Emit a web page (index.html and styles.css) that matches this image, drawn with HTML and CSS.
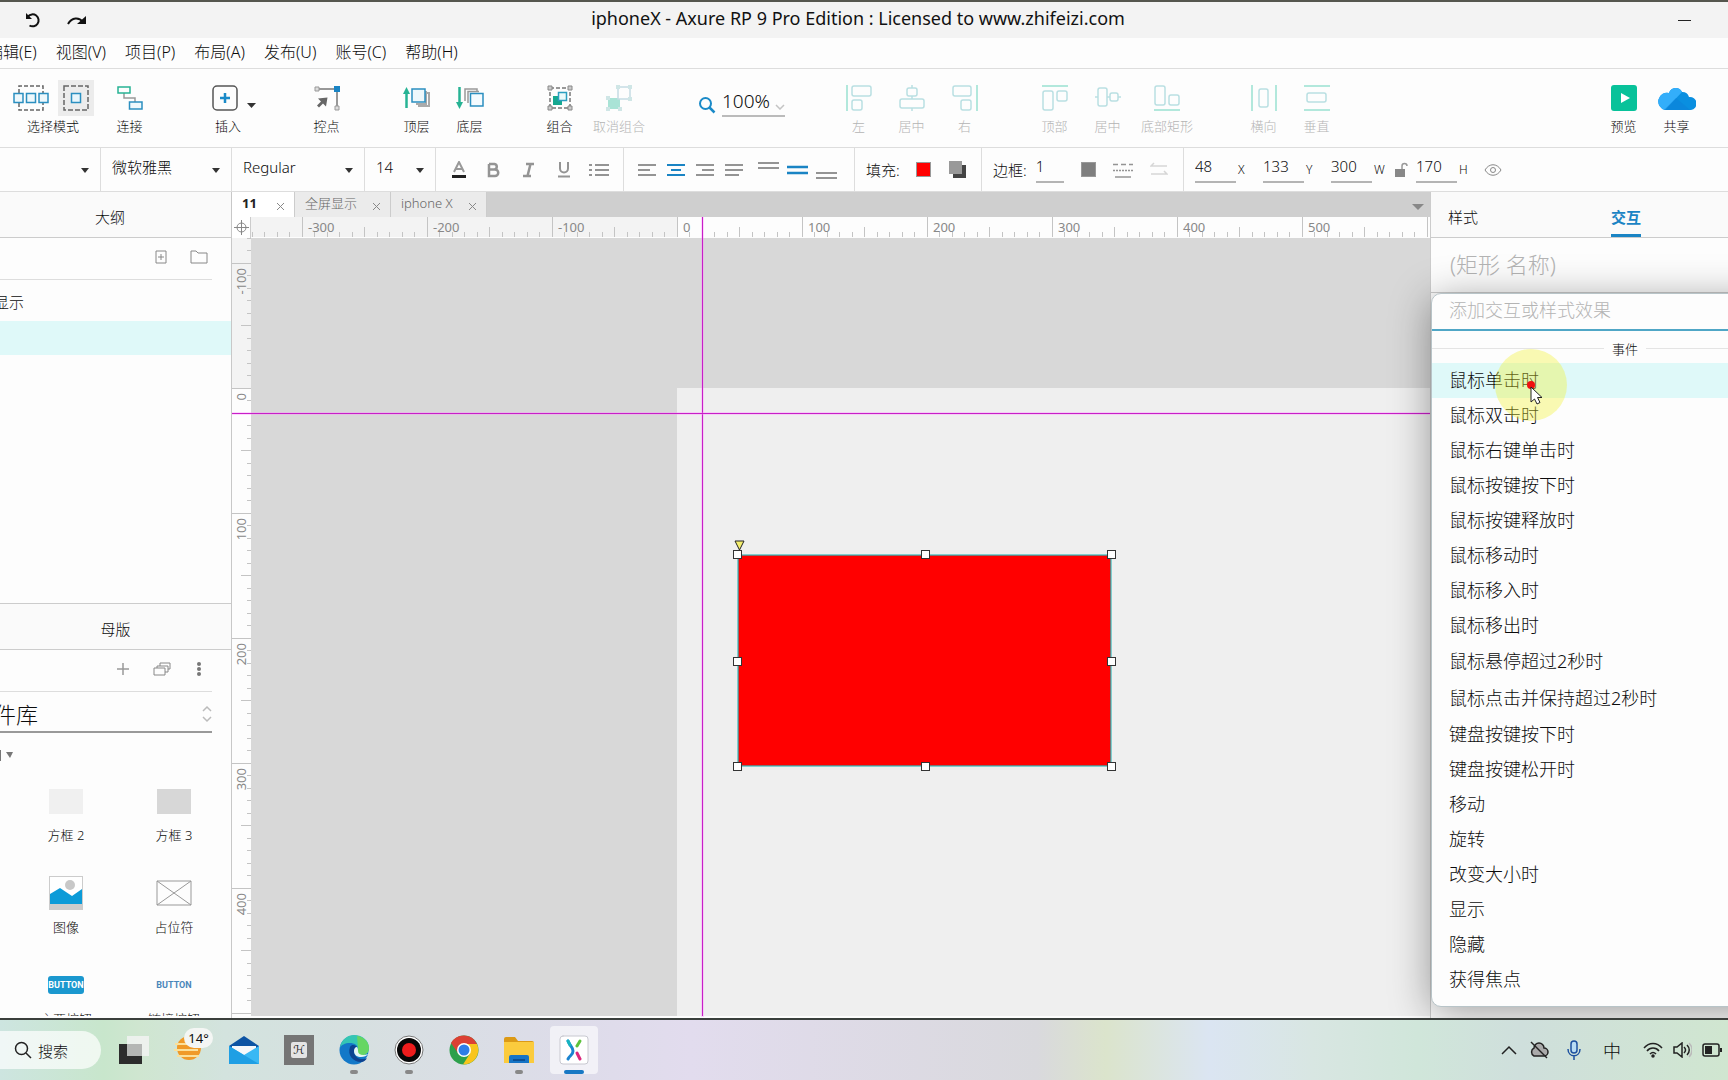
FILE: index.html
```html
<!DOCTYPE html>
<html lang="zh-CN">
<head>
<meta charset="utf-8">
<title>iphoneX - Axure RP 9</title>
<link rel="stylesheet" href="styles.css">
</head>
<body>
<header class="titlebar">
  <div class="title-actions">
    <button class="bare" aria-label="撤销"><svg width="18" height="18" viewBox="0 0 18 18" fill="none" stroke="#111" stroke-width="2"><path d="M4 5.500A6 6 0 1 1 5.500 14.500"/><path d="M2 2v6h6z" fill="#111" stroke="none"/></svg></button>
    <button class="bare" aria-label="重做"><svg width="20" height="18" viewBox="0 0 20 18" fill="none" stroke="#111" stroke-width="2"><path d="M1 13C5 6 12 6 16 11"/><path d="M19 5v8h-9z" fill="#111" stroke="none"/></svg></button>
  </div>
  <h1 class="title">iphoneX - Axure RP 9 Pro Edition : Licensed to www.zhifeizi.com</h1>
  <button class="bare minimize" aria-label="最小化"><svg width="14" height="14" viewBox="0 0 14 14" stroke="#222"><path d="M0 7.500h13"/></svg></button>
</header>

<nav class="menubar">
  <button class="bare">编辑(E)</button>
  <button class="bare">视图(V)</button>
  <button class="bare">项目(P)</button>
  <button class="bare">布局(A)</button>
  <button class="bare">发布(U)</button>
  <button class="bare">账号(C)</button>
  <button class="bare">帮助(H)</button>
</nav>

<div class="toolbar">
  <div class="group">
    <div class="mode" role="group" aria-labelledby="mode-label">
      <div class="mode-buttons">
        <button class="bare mode-button" aria-label="相交选中"><svg width="36" height="26" viewBox="0 0 36 26" fill="none"><path d="M6 8V1h24v7M6 18v7h24v-7" stroke="#666" stroke-width="1.500" stroke-dasharray="4 2"/><g stroke="#2b8fc0" stroke-width="1.500" fill="#eef8fc"><path d="M1 8.500h9v9H1zM13.500 8.500h9v9h-9zM26 8.500h9v9h-9z"/></g></svg></button>
        <button class="bare mode-button active" aria-label="包含选中"><svg width="26" height="26" viewBox="0 0 26 26" fill="none"><path d="M1 1h24v24H1z" stroke="#666" stroke-width="1.500" stroke-dasharray="5 2"/><path d="M8.500 8.500h9v9h-9z" stroke="#2b8fc0" stroke-width="1.500" fill="#e8f6fc"/></svg></button>
      </div>
      <span class="tool-label" id="mode-label">选择模式</span>
    </div>
    <button class="tool"><span class="tool-icon"><svg width="26" height="26" viewBox="0 0 26 26" fill="none" stroke-width="1.500"><path d="M7 8v5h11v4" stroke="#999"/><path d="M1 2h12v6H1z" stroke="#27b394"/><path d="M12.500 17H25v7H12.500z" stroke="#2b8fc0" fill="#eef8fc"/></svg></span><span class="tool-label">连接</span></button>
  </div>

  <button class="tool insert"><span class="tool-icon"><svg width="46" height="26" viewBox="0 0 46 26" fill="none"><rect x="1" y="1" width="24" height="24" rx="4" stroke="#555" stroke-width="1.500"/><path d="M13 8v10M8 13h10" stroke="#1a8ac8" stroke-width="2.500"/><path d="M35 18h9l-4.500 5z" fill="#333"/></svg></span><span class="tool-label">插入</span></button>

  <button class="tool"><span class="tool-icon"><svg width="26" height="26" viewBox="0 0 26 26" fill="none"><path d="M3 4h20v20" stroke="#777" stroke-width="1.500"/><path d="M1 2h4v4H1zM21 21h4v4h-4z" fill="#ddd" stroke="#999"/><path d="M20 1h6v6h-6z" fill="#1a84c4"/><path d="M13.500 12.500l-1.500 9-3-3-4 4-2-2 4-4-3-3z" fill="#666"/></svg></span><span class="tool-label">控点</span></button>

  <div class="group">
    <button class="tool"><span class="tool-icon"><svg width="28" height="26" viewBox="0 0 28 26" fill="none"><path d="M3.500 6v17" stroke="#27b394" stroke-width="2.500"/><path d="M0 9l3.500-7L7 9z" fill="#27b394"/><path d="M15 21h11V8h-4M13 19h10V6" stroke="#aaa" stroke-width="2"/><path d="M9 4h13v13H9z" fill="#eef8fc" stroke="#2b8fc0" stroke-width="1.500"/></svg></span><span class="tool-label">顶层</span></button>
    <button class="tool"><span class="tool-icon"><svg width="28" height="26" viewBox="0 0 28 26" fill="none"><path d="M3.500 2v18" stroke="#27b394" stroke-width="2.500"/><path d="M0 17l3.500 7L7 17z" fill="#27b394"/><path d="M9 16V4h12v3M12 18V6.500h11" stroke="#999" stroke-width="1.500"/><path d="M14.500 8.500H27V21H14.500z" fill="#f4fbff" stroke="#2b8fc0" stroke-width="1.500"/></svg></span><span class="tool-label">底层</span></button>
  </div>

  <div class="group">
    <button class="tool"><span class="tool-icon"><svg width="26" height="26" viewBox="0 0 26 26" fill="none"><path d="M3 3h20v20H3z" stroke="#777" stroke-width="1.500" stroke-dasharray="4 2"/><g fill="#ccc" stroke="#888"><path d="M1 1h4v4H1zM21 1h4v4h-4zM1 21h4v4H1zM21 21h4v4h-4z"/></g><path d="M6 11h9v9H6z" fill="#16a890"/><path d="M11.500 7.500h8v8h-8z" fill="#eafafa" stroke="#2b9fc0" stroke-width="1.500"/></svg></span><span class="tool-label">组合</span></button>
    <button class="tool wide" disabled><span class="tool-icon"><svg width="26" height="26" viewBox="0 0 26 26" fill="none"><path d="M2 13h12v11H2z" fill="#a9e3d6"/><path d="M12 2h12v12H12z" fill="#fdfdfd" stroke="#c5dce4" stroke-width="1.500"/><g fill="#cfe6e6"><path d="M10 0h4v4h-4zM22 0h4v4h-4zM22 12h4v4h-4zM0 11h4v4H0zM0 22h4v4H0zM12 22h4v4h-4z"/></g></svg></span><span class="tool-label">取消组合</span></button>
  </div>

  <div class="zoom">
    <svg width="18" height="18" viewBox="0 0 18 18" fill="none" stroke="#1a8ac8"><circle cx="7.500" cy="7.500" r="5.500" stroke-width="2"/><path d="M11.500 11.500l5 5" stroke-width="2.500"/></svg>
    <span class="zoom-field"><select aria-label="缩放"><option>100%</option></select><svg width="10" height="6" viewBox="0 0 10 6" fill="none" stroke="#c4c4c4" stroke-width="1.500"><path d="M1 1l4 4 4-4"/></svg></span>
  </div>

  <div class="group">
    <button class="tool" disabled><span class="tool-icon"><svg class="align" width="26" height="26" viewBox="0 0 26 26"><path class="guide" d="M1 0v26"/><rect x="6" y="1" width="19" height="10" rx="2"/><rect x="6" y="15" width="10" height="10" rx="2"/></svg></span><span class="tool-label">左</span></button>
    <button class="tool" disabled><span class="tool-icon"><svg class="align" width="26" height="26" viewBox="0 0 26 26"><path d="M13 0v3M13 11v3M13 23v3"/><rect x="8" y="3" width="10" height="8" rx="2"/><rect x="1" y="14" width="24" height="9" rx="2"/></svg></span><span class="tool-label">居中</span></button>
    <button class="tool" disabled><span class="tool-icon"><svg class="align" width="26" height="26" viewBox="0 0 26 26"><path class="guide" d="M25 0v26"/><rect x="1" y="1" width="18" height="10" rx="2"/><rect x="9" y="15" width="10" height="10" rx="2"/></svg></span><span class="tool-label">右</span></button>
  </div>

  <div class="group">
    <button class="tool" disabled><span class="tool-icon"><svg class="align" width="26" height="26" viewBox="0 0 26 26"><path class="guide" d="M0 1h26"/><rect x="1" y="6" width="10" height="19" rx="2"/><rect x="15" y="6" width="10" height="10" rx="2"/></svg></span><span class="tool-label">顶部</span></button>
    <button class="tool" disabled><span class="tool-icon"><svg class="align" width="26" height="26" viewBox="0 0 26 26"><path d="M0 12h3M12 12h3M23 12h3"/><rect x="3" y="3" width="9" height="18" rx="2"/><rect x="15" y="8" width="8" height="8" rx="2"/></svg></span><span class="tool-label">居中</span></button>
    <button class="tool wide" disabled><span class="tool-icon"><svg class="align" width="26" height="26" viewBox="0 0 26 26"><path class="guide" d="M0 25h26"/><rect x="1" y="1" width="10" height="19" rx="2"/><rect x="15" y="10" width="10" height="10" rx="2"/></svg></span><span class="tool-label">底部矩形</span></button>
  </div>

  <div class="group">
    <button class="tool" disabled><span class="tool-icon"><svg class="align" width="26" height="26" viewBox="0 0 26 26"><path class="guide" d="M1 0v26M25 0v26"/><rect x="8" y="4" width="9" height="18" rx="2"/></svg></span><span class="tool-label">横向</span></button>
    <button class="tool" disabled><span class="tool-icon"><svg class="align" width="26" height="26" viewBox="0 0 26 26"><path class="guide" d="M0 1h26M0 25h26"/><rect x="3" y="8" width="19" height="9" rx="2"/></svg></span><span class="tool-label">垂直</span></button>
  </div>

  <div class="group share">
    <button class="tool"><span class="tool-icon"><svg width="26" height="26" viewBox="0 0 26 26"><rect width="26" height="26" rx="3" fill="#08c29a"/><path d="M10 8l9 5-9 5z" fill="#fff"/></svg></span><span class="tool-label">预览</span></button>
    <button class="tool"><span class="tool-icon"><svg width="38" height="26" viewBox="0 0 38 26"><path d="M7 25a7.500 7.500 0 0 1 4-17 7 7 0 0 1 13-1 7 7 0 0 1 7 5 6.500 6.500 0 0 1 2 13z" fill="#0a8fe0"/><path d="M7 25a7.500 7.500 0 0 1 4-17 7 7 0 0 1 13-1L7 25z" fill="#33aefa"/><path d="M18 13l14 12h-26z" fill="#0b80d8" opacity=".5"/></svg></span><span class="tool-label">共享</span></button>
  </div>
</div>

<div class="formatbar">
  <span class="pick pick-style"><select aria-label="样式"><option></option></select></span>
  <span class="pick pick-font"><select aria-label="字体"><option>微软雅黑</option></select></span>
  <span class="pick pick-weight"><select aria-label="字重"><option>Regular</option></select></span>
  <span class="pick pick-size"><select aria-label="字号"><option>14</option></select></span>

  <div class="cell text-tools">
    <button class="bare" aria-label="文字颜色"><svg width="16" height="18" viewBox="0 0 16 18" fill="none"><path d="M3 11L8 1l5 10M5 8h6" stroke="#999" stroke-width="2"/><path d="M1 14h14v3H1z" fill="#222"/></svg></button>
    <button class="bare" aria-label="粗体"><svg width="16" height="18" viewBox="0 0 16 18" fill="none" stroke="#949494" stroke-width="2.500"><path d="M3 3v12h6a3 3 0 0 0 0-6.500H3M3 3h5.500a2.800 2.800 0 0 1 0 5.500"/></svg></button>
    <button class="bare" aria-label="斜体"><svg width="16" height="18" viewBox="0 0 16 18" fill="none" stroke="#949494" stroke-width="2.500"><path d="M5 3h8M2 15h8M9.500 3l-3 12" /></svg></button>
    <button class="bare" aria-label="下划线"><svg width="16" height="18" viewBox="0 0 16 18" fill="none" stroke="#949494" stroke-width="2"><path d="M4 1v6.500a4 4 0 0 0 8 0V1M2 15.500h12"/></svg></button>
    <button class="bare" aria-label="项目符号"><svg width="20" height="18" viewBox="0 0 20 18" fill="none" stroke="#949494" stroke-width="2"><path d="M0 4h3M0 9h3M0 14h3M6 4h14M6 9h14M6 14h14"/></svg></button>
  </div>

  <div class="cell align-tools">
    <div class="group">
      <button class="bare" aria-label="左对齐"><svg width="18" height="18" viewBox="0 0 18 18" stroke="#949494" stroke-width="2"><path d="M0 4h18M0 9h12M0 14h18"/></svg></button>
      <button class="bare" aria-label="居中对齐"><svg width="18" height="18" viewBox="0 0 18 18" stroke="#1a84c4" stroke-width="2"><path d="M0 4h18M4 9h10M0 14h18"/></svg></button>
      <button class="bare" aria-label="右对齐"><svg width="18" height="18" viewBox="0 0 18 18" stroke="#949494" stroke-width="2"><path d="M0 4h18M6 9h12M0 14h18"/></svg></button>
      <button class="bare" aria-label="两端对齐"><svg width="18" height="18" viewBox="0 0 18 18" stroke="#949494" stroke-width="2"><path d="M0 4h18M0 9h18M0 14h14"/></svg></button>
    </div>
    <div class="group">
      <button class="bare" aria-label="顶部对齐"><svg width="21" height="18" viewBox="0 0 21 18" stroke="#949494" stroke-width="2"><path d="M0 2h21M0 7h21"/></svg></button>
      <button class="bare" aria-label="垂直居中"><svg width="21" height="18" viewBox="0 0 21 18" stroke="#1a84c4" stroke-width="2.500"><path d="M0 6h21M0 12h21"/></svg></button>
      <button class="bare" aria-label="底部对齐"><svg width="21" height="18" viewBox="0 0 21 18" stroke="#949494" stroke-width="2"><path d="M0 12h21M0 17h21"/></svg></button>
    </div>
  </div>

  <div class="cell fill-tools">
    <span>填充:</span>
    <button class="bare swatch red" aria-label="填充颜色"></button>
    <button class="bare" aria-label="阴影"><svg width="17" height="17" viewBox="0 0 17 17"><path d="M4 4h13v13H4z" fill="#444"/><path d="M0 0h13v13H0z" fill="#999"/></svg></button>
  </div>

  <div class="cell border-tools">
    <label for="border-width">边框:</label>
    <input class="field short" id="border-width" value="1">
    <button class="bare swatch grey" aria-label="边框颜色"></button>
    <button class="bare" aria-label="线型"><svg width="20" height="18" viewBox="0 0 20 18" fill="none" stroke="#949494"><path d="M0 3.500h20" stroke-width="1.500" stroke-dasharray="5 3"/><path d="M0 9.500h20" stroke-width="1.500" stroke-dasharray="2 1"/><path d="M2 16h16" stroke-width="1.500"/></svg></button>
    <button class="bare" aria-label="箭头"><svg width="18" height="18" viewBox="0 0 18 18" fill="none" stroke="#d6d6d6" stroke-width="1.500"><path d="M17 5H1l3-3M1 13h16l-3-3"/></svg></button>
  </div>

  <div class="cell size-tools">
    <span class="dim"><input class="field" id="dim-x" value="48"><label for="dim-x">X</label></span>
    <span class="dim"><input class="field" id="dim-y" value="133"><label for="dim-y">Y</label></span>
    <span class="dim"><input class="field" id="dim-w" value="300"><label for="dim-w">W</label></span>
    <button class="bare lock" aria-label="锁定比例"><svg width="13" height="16" viewBox="0 0 13 16"><path d="M0 7h10v8H0z" fill="#888"/><path d="M7 7V4a2.500 2.500 0 0 1 5 0" fill="none" stroke="#999" stroke-width="1.500"/></svg></button>
    <span class="dim"><input class="field" id="dim-h" value="170"><label for="dim-h">H</label></span>
    <button class="bare" aria-label="可见性"><svg width="18" height="14" viewBox="0 0 18 14" fill="none" stroke="#888"><path d="M1 7c4-7 12-7 16 0-4 7-12 7-16 0z"/><circle cx="9" cy="7" r="2.500"/></svg></button>
  </div>
</div>

<main class="workspace">
  <aside class="left">
    <section class="outline">
      <h2 class="panel-head">大纲</h2>
      <div class="panel-tools">
        <button class="bare" aria-label="添加页面"><svg width="12" height="14" viewBox="0 0 12 14" fill="none" stroke="#888"><path d="M1 1h10v12H1zM6 4v6M3 7h6"/></svg></button>
        <button class="bare" aria-label="添加文件夹"><svg width="18" height="14" viewBox="0 0 18 14" fill="none" stroke="#888"><path d="M1 1h5l2 2h9v10H1z"/></svg></button>
      </div>
      <ul class="pages">
        <li><button class="bare">全屏显示</button></li>
        <li class="selected"><button class="bare" aria-label="11"></button></li>
      </ul>
    </section>
    <section class="library">
      <h2 class="panel-head">母版</h2>
      <div class="panel-tools">
        <button class="bare" aria-label="添加母版"><svg width="14" height="14" viewBox="0 0 14 14" stroke="#999" stroke-width="1.500"><path d="M7 1v12M1 7h12"/></svg></button>
        <button class="bare" aria-label="层叠"><svg width="18" height="14" viewBox="0 0 18 14" fill="none" stroke="#888"><path d="M1 6h11v7H1zM4 6V4h11v6h-3M7 4V1h10v6h-2"/></svg></button>
        <button class="bare" aria-label="更多"><svg width="10" height="14" viewBox="0 0 10 14" fill="#777"><circle cx="5" cy="2" r="2"/><circle cx="5" cy="7" r="2"/><circle cx="5" cy="12" r="2"/></svg></button>
      </div>
      <div class="library-name"><select aria-label="元件库"><option>元件库</option></select><svg width="10" height="18" viewBox="0 0 10 18" fill="none" stroke="#bbb" stroke-width="1.500"><path d="M1 6l4-4 4 4M1 12l4 4 4-4"/></svg></div>
      <button class="bare category" aria-label="分类"><svg width="14" height="12" viewBox="0 0 14 12" fill="#777"><path d="M0 1h1v11H0zM6 3h7l-3 6z"/></svg></button>
      <div class="widgets">
        <button class="widget"><span class="widget-icon"><i class="box light"></i></span>方框 2</button>
        <button class="widget"><span class="widget-icon"><i class="box dark"></i></span>方框 3</button>
        <button class="widget"><span class="widget-icon"><svg width="34" height="34" viewBox="0 0 34 34"><path d="M0 0h34v34H0z" fill="#ccc"/><path d="M1 1h32v27H1z" fill="#fff"/><circle cx="21" cy="9" r="5" fill="#c8c8c8"/><path d="M1 18l10-6 12 8 10-7v15H1z" fill="#0c9bd8"/></svg></span>图像</button>
        <button class="widget"><span class="widget-icon"><svg width="36" height="26" viewBox="0 0 36 26" fill="none" stroke="#999"><path d="M1 1h34v24H1zM1 1l34 24M35 1L1 25"/></svg></span>占位符</button>
        <button class="widget"><span class="widget-icon"><b class="mini primary">BUTTON</b></span>主要按钮</button>
        <button class="widget"><span class="widget-icon"><b class="mini link">BUTTON</b></span>链接按钮</button>
      </div>
    </section>
  </aside>

  <section class="editor">
    <div class="tabs">
      <div class="tab current"><span>11</span><button class="bare close" aria-label="关闭"><svg width="9" height="9" viewBox="0 0 9 9" stroke="#888"><path d="M1 1l7 7M8 1L1 8"/></svg></button></div>
      <div class="tab"><span>全屏显示</span><button class="bare close" aria-label="关闭"><svg width="9" height="9" viewBox="0 0 9 9" stroke="#888"><path d="M1 1l7 7M8 1L1 8"/></svg></button></div>
      <div class="tab"><span>iphone X</span><button class="bare close" aria-label="关闭"><svg width="9" height="9" viewBox="0 0 9 9" stroke="#888"><path d="M1 1l7 7M8 1L1 8"/></svg></button></div>
      <button class="bare tab-list" aria-label="所有标签"><svg width="12" height="8" viewBox="0 0 12 8"><path d="M0 1h12l-6 6z" fill="#888"/></svg></button>
    </div>
    <div class="stage">
      <div class="corner"><svg width="15" height="15" viewBox="0 0 15 15" fill="none" stroke="#888"><circle cx="7.500" cy="7.500" r="4.500"/><path d="M7.500 0v15M0 7.500h15"/></svg></div>
      <svg class="ruler ruler-x" width="100%" height="20">
        <defs><pattern id="ticks-x" x="426" y="0" width="125" height="20" patternUnits="userSpaceOnUse"><path stroke="#c4c4c4" d="M.500 0v20M12.500 15v5M25.500 15v5M37.500 15v5M50.500 15v5M62.500 10v10M75.500 15v5M87.500 15v5M100.500 15v5M112.500 15v5"/></pattern></defs>
        <rect width="426" height="20" fill="#f3f3f3"/>
        <rect width="100%" height="20" fill="url(#ticks-x)"/>
        <g><text x="57" y="15">-300</text><text x="182" y="15">-200</text><text x="307" y="15">-100</text><text x="432" y="15">0</text><text x="557" y="15">100</text><text x="682" y="15">200</text><text x="807" y="15">300</text><text x="932" y="15">400</text><text x="1057" y="15">500</text></g>
      </svg>
      <svg class="ruler ruler-y" width="20" height="100%">
        <defs><pattern id="ticks-y" x="0" y="150" width="20" height="125" patternUnits="userSpaceOnUse"><path stroke="#c4c4c4" d="M0 .500h20M15 12.500h5M15 25.500h5M15 37.500h5M15 50.500h5M9 62.500h11M15 75.500h5M15 87.500h5M15 100.500h5M15 112.500h5"/></pattern></defs>
        <rect width="20" height="150" fill="#f3f3f3"/>
        <rect width="20" height="100%" fill="url(#ticks-y)"/>
        <g text-anchor="end"><text transform="translate(14 30) rotate(-90)">-100</text><text transform="translate(14 155) rotate(-90)">0</text><text transform="translate(14 280) rotate(-90)">100</text><text transform="translate(14 405) rotate(-90)">200</text><text transform="translate(14 530) rotate(-90)">300</text><text transform="translate(14 655) rotate(-90)">400</text></g>
      </svg>
      <div class="canvas">
        <div class="page">
          <div class="shape">
            <i class="handle n w"></i><i class="handle n c"></i><i class="handle n e"></i>
            <i class="handle m w"></i><i class="handle m e"></i>
            <i class="handle s w"></i><i class="handle s c"></i><i class="handle s e"></i>
            <svg class="radius-grip" width="11" height="11" viewBox="0 0 11 11"><path d="M1 1h9l-4.500 9z" fill="#f4ee6c" stroke="#222"/></svg>
          </div>
        </div>
      </div>
      <i class="guide-v"></i>
      <i class="guide-h"></i>
    </div>
  </section>

  <aside class="right">
    <div class="inspector-tabs">
      <button class="bare">样式</button>
      <button class="bare current">交互</button>
    </div>
    <input class="shape-name" aria-label="名称" placeholder="(矩形 名称)">
    <div class="events">
      <input class="event-search" aria-label="添加交互" placeholder="添加交互或样式效果">
      <div class="event-group">事件</div>
      <button class="event hover">鼠标单击时</button>
      <button class="event">鼠标双击时</button>
      <button class="event">鼠标右键单击时</button>
      <button class="event">鼠标按键按下时</button>
      <button class="event">鼠标按键释放时</button>
      <button class="event">鼠标移动时</button>
      <button class="event">鼠标移入时</button>
      <button class="event">鼠标移出时</button>
      <button class="event tall">鼠标悬停超过2秒时</button>
      <button class="event tall">鼠标点击并保持超过2秒时</button>
      <button class="event">键盘按键按下时</button>
      <button class="event">键盘按键松开时</button>
      <button class="event">移动</button>
      <button class="event">旋转</button>
      <button class="event">改变大小时</button>
      <button class="event">显示</button>
      <button class="event">隐藏</button>
      <button class="event">获得焦点</button>
      <svg class="pointer" width="74" height="74" viewBox="0 0 74 74"><circle cx="37" cy="37" r="36" fill="#f0f02d" opacity=".36"/><circle cx="37" cy="37" r="4" fill="#f01010"/><path d="M37 39v15l3.500-3 2.500 5 3-1.500-2.500-5h4.500z" fill="#fff" stroke="#222"/></svg>
    </div>
  </aside>
</main>

<footer class="taskbar">
  <button class="search"><svg width="18" height="18" viewBox="0 0 18 18" fill="none" stroke="#222" stroke-width="1.500"><circle cx="7.500" cy="7.500" r="6"/><path d="M12 12l5 5"/></svg>搜索</button>
  <div class="apps">
    <button class="app" aria-label="任务视图"><svg width="30" height="30" viewBox="0 0 30 30"><path d="M0 9h23v20H0z" fill="#2c2c2c"/><path d="M8 1h22v20H8z" fill="#f4f4f4" opacity=".8"/><path d="M8 9h15v12H8z" fill="#b4b6b4"/></svg></button>
    <button class="app weather" aria-label="天气"><svg width="30" height="30" viewBox="0 0 30 30"><circle cx="15" cy="13" r="12" fill="#f09a28"/><path d="M1 9h16M0 15h24M3 21h22" stroke="#fbe09a" stroke-width="2"/></svg><span class="degree">14°</span></button>
    <button class="app" aria-label="邮件"><svg width="30" height="30" viewBox="0 0 30 30"><path d="M0 11L15 1l15 10v6H0z" fill="#0d54a4"/><path d="M3 11h24v9H3z" fill="#f6f8fb"/><path d="M0 11l15 9 15-9v18H0z" fill="#39b8f4"/><path d="M0 11l30 18H0z" fill="#1f9fe4"/></svg></button>
    <button class="app note" aria-label="笔记"><span class="note-tile"><span>ℋ</span></span></button>
    <button class="app running" aria-label="Edge"><svg width="30" height="30" viewBox="0 0 30 30"><circle cx="15" cy="15" r="14.500" fill="#1378c8"/><path d="M1 13C2 4 9 0 15 0c9 0 15 6 15 13 0 5-4 8-9 7-4-1-2-3-2-6 0-4-4-6-8-6-5 0-9 2-10 5z" fill="#35c6b4"/><path d="M18 1c8 1 12 7 12 12 0 5-4 8-9 7-4-1-2-3-2-6z" fill="#66d663"/><path d="M11 12c-3 8 3 15 11 15 3 0 5-2 6-4-3 2-12 2-13-6 0-3 2-4 3-5-2-2-5-3-7 0z" fill="#0d4390"/><path d="M15 16c0-2 1-4 3-4 1 1 1 3 1 4 0 4 5 5 10 3-2 4-14 5-14-3z" fill="#e5f5f4"/></svg></button>
    <button class="app running" aria-label="录屏"><svg width="30" height="30" viewBox="0 0 30 30"><circle cx="15" cy="15" r="14" fill="#fff" stroke="#777"/><circle cx="15" cy="15" r="12" fill="#080808"/><circle cx="15" cy="15" r="7" fill="#ee1c1c"/></svg></button>
    <button class="app" aria-label="Chrome"><svg width="30" height="30" viewBox="0 0 30 30"><circle cx="15" cy="15" r="14.500" fill="#2da04c"/><path d="M2 8a14.500 14.500 0 0 1 26 1H15l-6 9z" fill="#dc4034"/><path d="M28 9a14.500 14.500 0 0 1-14 20.500l7-11L15 9z" fill="#f8c51c"/><circle cx="15" cy="15" r="7" fill="#fff"/><circle cx="15" cy="15" r="5.500" fill="#2f7de8"/></svg></button>
    <button class="app running" aria-label="资源管理器"><svg width="30" height="30" viewBox="0 0 30 30"><path d="M0 4q0-2 2-2h9l3 4h14q2 0 2 2v8H0z" fill="#dc9a16"/><path d="M0 7h30v21H0z" fill="#fbcb3d"/><path d="M5 28v-6q0-2 2-2h16q2 0 2 2v6z" fill="#1674c6"/><path d="M9 24h12v2H9z" fill="#0c4f94"/></svg></button>
    <button class="app running active" aria-label="Axure"><svg width="30" height="30" viewBox="0 0 30 30" fill="none" stroke-width="3" stroke-linecap="round"><rect x="1" y="1" width="28" height="28" rx="3" fill="#fff" stroke="#c8c8d0" stroke-width="1"/><path d="M9 6c2 5 5 6 5 10s-3 4-5 8" stroke="#1b84d0"/><path d="M21 6l-3 5" stroke="#5cc23c"/><path d="M18 18l3 6" stroke="#dc287c"/><path d="M9 6l2 4" stroke="#16b4c0"/></svg></button>
  </div>
  <div class="tray">
    <div class="tray-hidden">
      <svg width="16" height="10" viewBox="0 0 16 10" fill="none" stroke="#222" stroke-width="1.500"><path d="M1 9l7-7 7 7"/></svg>
      <svg width="20" height="18" viewBox="0 0 20 18" fill="none" stroke="#222" stroke-width="1.500"><path d="M5 15a4.500 4.500 0 0 1 0-8 5 5 0 0 1 10 0 4 4 0 0 1 0 8z" fill="#aaa"/><path d="M2 1l16 16"/></svg>
    </div>
    <svg width="14" height="20" viewBox="0 0 14 20" fill="none" stroke="#1c50a0" stroke-width="1.500"><rect x="4" y="1" width="6" height="12" rx="3" fill="#b8dcf4"/><path d="M1 9c0 9 12 9 12 0M7 16v4"/></svg>
    <span class="ime">中</span>
    <div class="tray-system">
      <svg width="20" height="16" viewBox="0 0 20 16" fill="none" stroke="#222" stroke-width="1.500"><path d="M1 6c5-6 13-6 18 0M4 9c3-4 9-4 12 0M7 12c2-2 4-2 6 0"/><circle cx="10" cy="14" r="1" fill="#222"/></svg>
      <svg width="19" height="16" viewBox="0 0 19 16" fill="none" stroke="#222" stroke-width="1.500"><path d="M1 5h3l5-4v14l-5-4H1zM11 5c2 2 2 4 0 6M14 3c3 3 3 7 0 10"/><path d="M16 1c4 4 4 10 0 14" stroke="#bbb"/></svg>
      <svg width="20" height="14" viewBox="0 0 20 14"><rect x="1" y="1" width="16" height="12" rx="2" fill="none" stroke="#222" stroke-width="1.500"/><path d="M3 3h7v8H3zM18 5h2v4h-2z" fill="#222"/></svg>
    </div>
  </div>
</footer>
</body>
</html>
```
FILE: styles.css
```css
* { box-sizing: border-box; }

body {
  margin: 0;
  height: 100vh;
  display: grid;
  grid-template-rows: 38px 31px 79px 44px minmax(0, 1fr) 62px;
  grid-template-columns: minmax(0, 1fr);
  overflow: hidden;
  background: #fdfdfd;
  color: #0c0c0c;
  font-family: "Noto Sans", "Noto Sans CJK SC", sans-serif;
  font-size: 15px;
  font-weight: 300;
}

button, input, select {
  font: inherit;
  color: inherit;
  margin: 0;
  padding: 0;
  border: 0;
  border-radius: 0;
  background: none;
}
input:focus, button:focus { outline: 0; }
select { appearance: none; }
svg { display: block; flex: none; }
ul { list-style: none; margin: 0; padding: 0; }
h1, h2 { margin: 0; font-weight: inherit; }

.bare { display: flex; align-items: center; justify-content: center; white-space: nowrap; }
.group { display: flex; }

/* title bar and menu */
.titlebar {
  display: grid;
  grid-template-columns: 1fr auto 1fr;
  align-items: center;
  background: #f3f3f3;
  border-top: 2px solid #55564e;
  padding: 0 36px 0 24px;
}
.title-actions { display: flex; gap: 25px; }
.title { font-size: 18px; font-weight: 400; line-height: 30px; color: #111; padding-bottom: 4px; }
.minimize { justify-self: end; }

.menubar {
  display: flex;
  gap: 19px;
  margin-left: -13px;
  padding-bottom: 4px;
  border-bottom: 1px solid #ddd;
  font-size: 16px;
}

/* main toolbar */
.toolbar {
  display: flex;
  align-items: flex-start;
  gap: 37px;
  padding: 11px 25px 0 3px;
  border-bottom: 1px solid #ddd;
  font-size: 13px;
}
.tool { width: 53px; display: flex; flex-direction: column; align-items: center; }
.tool.wide { width: 66px; }
.insert { width: 70px; }
.insert .tool-icon { padding-left: 14px; }
.tool:disabled { color: #b4b4b4; }
.tool-icon { height: 36px; display: flex; align-items: center; }
.tool-label { line-height: 20px; white-space: nowrap; }
.mode { width: 100px; display: flex; flex-direction: column; align-items: center; }
.mode-buttons { display: flex; gap: 9px; }
.mode-button { width: 36px; height: 36px; }
.mode-button.active { background: #ececec; }
.align { fill: none; stroke: #b9dfe2; stroke-width: 1.5; }
.align .guide { stroke: #b2e8dc; stroke-width: 2; }
.zoom { width: 106px; padding: 12px 0 0 9px; display: flex; align-items: flex-start; gap: 6px; }
.zoom > svg { margin-top: 4px; }
.zoom-field { width: 63px; height: 25px; display: flex; align-items: center; border-bottom: 2px solid #bbb; }
.zoom-field svg { margin-top: 6px; }
.zoom-field select { width: 53px; font-size: 19px; line-height: 20px; margin-top: -6px; }
.share { margin-left: auto; }

/* format bar */
.formatbar { display: flex; border-bottom: 1px solid #ddd; }
.pick { display: flex; position: relative; border-right: 1px solid #ddd; }
.pick::after {
  content: "";
  position: absolute;
  right: 11px;
  top: 20px;
  border: 4px solid transparent;
  border-top: 5px solid #333;
  border-bottom: 0;
}
.pick select { width: 100%; padding: 0 24px 6px 11px; }
.pick-style { width: 101px; }
.pick-font { width: 131px; }
.pick-weight { width: 133px; }
.pick-size { width: 71px; }
.cell { display: flex; align-items: center; border-right: 1px solid #ddd; }
.text-tools { width: 188px; padding-left: 5px; }
.text-tools .bare { width: 35px; }
.align-tools { width: 231px; padding-left: 8px; gap: 6px; }
.align-tools .bare { width: 29px; }
.fill-tools { width: 127px; padding-left: 11px; gap: 16px; }
.fill-tools .swatch { margin-right: 2px; }
.border-tools { width: 202px; padding-left: 11px; gap: 17px; }
.border-tools .field { margin-left: -8px; }
.swatch { width: 15px; height: 15px; border: 1px solid #999; }
.swatch.red { background: #f00; }
.swatch.grey { background: #7f7f7f; }
.field { width: 41px; height: 26px; padding-bottom: 5px; border-bottom: 2px solid #b4b4b4; }
.field.short { width: 28px; }
.size-tools { padding-left: 11px; gap: 12px; border-right: 0; }
.dim { display: flex; align-items: center; gap: 2px; }
.dim label { width: 13px; font-size: 12px; }
.lock { margin: 0 -4px; }

/* workspace */
.workspace {
  display: grid;
  grid-template-columns: 231px minmax(0, 1fr) 297px;
  grid-template-rows: minmax(0, 1fr);
  overflow: hidden;
}
.left {
  display: grid;
  grid-template-rows: 411px minmax(0, 1fr);
  margin-bottom: 2px;
  overflow: hidden;
}
.panel-head {
  height: 46px;
  padding: 6px 11px 0 0;
  background: #fafafa;
  border-bottom: 1px solid #ccc;
  font-size: 15px;
  line-height: 38px;
  text-align: center;
}
.panel-tools {
  height: 42px;
  margin-right: 19px;
  padding: 0 4px 4px 0;
  display: flex;
  align-items: center;
  justify-content: flex-end;
  gap: 23px;
  border-bottom: 1px solid #ddd;
}
.pages { padding-top: 5px; }
.pages li { height: 36px; display: flex; margin-left: -36px; padding-bottom: 4px; }
.pages .selected { height: 34px; margin: 0; background: #dff9f9; }
.library { border-top: 1px solid #ccc; overflow: hidden; }
.library .panel-head { height: 46px; padding-right: 0; }
.library .panel-tools { padding-right: 8px; }
.library-name {
  height: 41px;
  margin-right: 19px;
  padding-top: 5px;
  display: flex;
  align-items: center;
  justify-content: space-between;
  border-bottom: 2px solid #999;
}
.library-name select { font-size: 22px; margin-left: -28px; width: 100px; }
.category { height: 33px; padding-top: 10px; }
.widgets { display: grid; grid-template-columns: 108px 108px; padding-left: 12px; }
.widget {
  height: 92px;
  padding-top: 17px;
  display: flex;
  flex-direction: column;
  align-items: center;
  gap: 6px;
  font-size: 13px;
  line-height: 20px;
  white-space: nowrap;
}
.widget-icon { height: 36px; display: flex; align-items: center; }
.box { width: 34px; height: 25px; }
.box.light { background: #f0f0f0; }
.box.dark { background: #d7d7d7; }
.mini { width: 36px; height: 18px; font: bold 9px/18px Roboto, sans-serif; text-align: center; }
.mini.primary { background: #1b98cf; color: #fff; border-radius: 3px; }
.mini.link { color: #4a86ba; }

.editor {
  display: grid;
  grid-template-rows: 25px minmax(0, 1fr);
  border-left: 1px solid #c8c8c8;
  border-right: 1px solid #ccc;
}
.tabs { display: flex; background: #cfcfcf; font-size: 13px; color: #666; }
.tab { width: 96px; padding: 0 9px 0 10px; display: flex; align-items: center; justify-content: space-between; background: #ebebeb; border-right: 1px solid #ccc; white-space: nowrap; }
.tab span { padding-bottom: 4px; }
.tab.current { width: 63px; background: #fff; color: #222; font-weight: 700; }
.close { padding-top: 3px; }
.tab-list { margin: 4px 6px 0 auto; }

.stage {
  position: relative;
  display: grid;
  grid-template-columns: 19px minmax(0, 1fr);
  grid-template-rows: 21px minmax(0, 1fr);
  background: #fdfdfd;
  overflow: hidden;
}
.corner { display: grid; place-items: center; background: #fff; border-right: 1px solid #ccc; }
.ruler { font-size: 13px; font-weight: 400; fill: #888; min-width: 0; min-height: 0; }
.ruler-y { height: 100%; width: 19px; }
.canvas { position: relative; overflow: hidden; background: #d8d8d8; margin-bottom: 2px; }
.page { position: absolute; left: 426px; top: 150px; right: 0; bottom: 0; background: #efefef; }
.shape {
  position: absolute;
  left: 61px;
  top: 167px;
  width: 373px;
  height: 211px;
  background: #f00;
  border: 1px solid #777;
  outline: 1px solid #7fd0d0;
}
.handle { position: absolute; width: 9px; height: 9px; background: #fff; border: 1px solid #333; }
.handle.n { top: -6px; }
.handle.m { top: calc(50% - 4px); }
.handle.s { bottom: -6px; }
.handle.w { left: -6px; }
.handle.c { left: calc(50% - 4px); }
.handle.e { right: -6px; }
.radius-grip { position: absolute; left: -5px; top: -16px; }
.guide-v, .guide-h { position: absolute; background: #c71fc7; box-shadow: 0 0 0 1px rgba(255, 130, 255, .3); }
.guide-v { left: 470px; top: 0; bottom: 2px; width: 1px; }
.guide-h { top: 196px; left: 0; right: 0; height: 1px; }

/* inspector */
.right { position: relative; }
.inspector-tabs {
  height: 46px;
  padding-left: 17px;
  display: flex;
  gap: 133px;
  background: #fafafa;
  border-bottom: 1px solid #ccc;
}
.inspector-tabs .bare { height: 45px; padding-top: 6px; border-bottom: 3px solid transparent; }
.inspector-tabs .current { color: #1a84c4; font-weight: 700; border-bottom-color: #1a84c4; }
.shape-name { width: 100%; height: 55px; padding: 0 0 2px 19px; border-bottom: 1px solid #ccc; font-size: 22px; }
.right input::placeholder { color: #b4b4b4; opacity: 1; }
.events {
  position: absolute;
  left: 0;
  top: 101px;
  width: 388px;
  padding-bottom: 9px;
  background: #fdfdfd;
  border: 1px solid #b8c4c8;
  border-radius: 10px;
  box-shadow: 0 6px 40px rgba(0, 0, 0, .38);
}
.event-search { width: 100%; height: 37px; padding: 0 17px 4px; border-bottom: 2px solid #4fa6c6; font-size: 18px; display: block; }
.event-group { height: 32px; padding-top: 2px; display: flex; align-items: center; gap: 8px; font-size: 13px; }
.event-group::before, .event-group::after { content: ""; height: 1px; flex: 1; background: #e4e4e4; }
.event { display: block; width: 100%; height: 35px; padding-left: 17px; text-align: left; font-size: 18px; line-height: 35px; }
.event.tall { height: 37px; line-height: 37px; }
.event.hover { background: #dff9f9; }
.pointer { position: absolute; left: 62px; top: 54px; pointer-events: none; }

/* taskbar */
.taskbar {
  display: flex;
  align-items: center;
  border-top: 2px solid #3a3f3c;
  background: linear-gradient(90deg, #cde5e0 0, #c8e6cc 6%, #cfe6d0 8%, #d3e3de 13%, #d6e0e0 20%, #dedcea 34%, #e2dcee 40%, #d9d9dd 60%, #dbe4cc 64%, #dbe5f2 70%, #d8e6e2 76%, #d0e6da 82%, #cfdfdc 88%, #d0e6d0 100%);
}
.search { width: 101px; height: 38px; padding-left: 14px; display: flex; align-items: center; gap: 6px; background: rgba(255, 255, 255, .7); border-radius: 0 19px 19px 0; }
.apps { display: flex; gap: 7px; margin-left: 9px; }
.app { position: relative; width: 48px; height: 48px; display: grid; place-items: center; border-radius: 4px; }
.app.active { background: rgba(255, 255, 255, .6); }
.app.running::after { content: ""; position: absolute; bottom: 0; left: 20px; width: 8px; height: 4px; border-radius: 2px; background: #888; }
.app.active::after { left: 14px; width: 20px; background: #1878c4; }
.weather .degree { position: absolute; left: 19px; top: 2px; width: 29px; height: 20px; border-radius: 10px; background: #f4f6f4; font-size: 13px; font-weight: 400; line-height: 20px; }
.note-tile { width: 30px; height: 30px; display: grid; place-items: center; background: #757575; }
.note-tile span { width: 16px; height: 16px; border-radius: 2px; background: #e4e4e4; font: 12px/16px "DejaVu Sans", serif; color: #222; }
.tray { margin-left: auto; padding-right: 6px; display: flex; align-items: center; gap: 22px; }
.tray-hidden { display: flex; align-items: center; gap: 12px; margin-right: -4px; }
.tray-system { display: flex; align-items: center; gap: 10px; }
.ime { font-size: 18px; }
```
